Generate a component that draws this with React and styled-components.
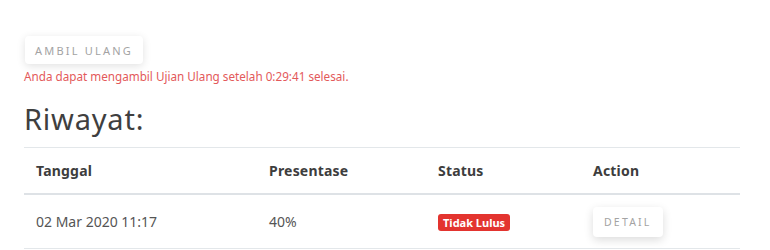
import React from "react";
import styled, { createGlobalStyle } from "styled-components";

const GlobalStyle = createGlobalStyle`
  html, body {
    margin: 0;
    padding: 0;
    background: #fff;
  }
  body {
    font-family: "Noto Sans", "Open Sans", sans-serif;
    color: #3d4852;
  }
`;

const Page = styled.div`
  width: 716px;
  padding: 36px 0 0 24px;
`;

const RetakeButton = styled.button`
  display: inline-block;
  margin-left: 1px;
  height: 28px;
  padding: 0 10px;
  background: #fff;
  border: 0;
  border-radius: 4px;
  box-shadow: 0 2px 8px rgba(0, 0, 0, 0.12);
  font-family: inherit;
  font-size: 11px;
  letter-spacing: 2.2px;
  color: #a3a3a3;
  text-transform: uppercase;
`;

const Notice = styled.p`
  margin: 4px 0 0;
  font-size: 11.7px;
  line-height: 16px;
  color: #e3595a;
`;

const Title = styled.h2`
  margin: 16px 0 0;
  font-size: 29px;
  font-weight: 400;
  letter-spacing: 0.8px;
  line-height: 38px;
  color: #3f3f3f;
`;

const Table = styled.table`
  width: 100%;
  margin-top: 9px;
  border-collapse: collapse;
  table-layout: fixed;
`;

const Th = styled.th`
  text-align: left;
  font-size: 14px;
  font-weight: 700;
  letter-spacing: 0.2px;
  color: #3d3d3d;
  padding: 0 12px;
  height: 45px;
  border-top: 1px solid #e3e7ea;
  border-bottom: 2px solid #dee2e6;
  width: ${(p) => p.$w || "auto"};
`;

const Td = styled.td`
  font-size: 14px;
  color: #555;
  padding: 0 12px;
  height: 53px;
  border-bottom: 1px solid #e3e7ea;
`;

const Badge = styled.span`
  display: inline-block;
  background: #e3342f;
  color: #fff;
  font-size: 11px;
  font-weight: 700;
  padding: 2px 5px;
  border-radius: 3px;
  line-height: 13px;
  margin-top: 2px;
`;

const DetailButton = styled(RetakeButton)`
  height: 30px;
  padding: 0 11px;
  font-size: 10.5px;
  letter-spacing: 2.2px;
  margin-left: 0;
  box-shadow: 0 3px 10px rgba(0, 0, 0, 0.14);
`;

export default function App() {
  return (
    <Page>
      <GlobalStyle />
      <RetakeButton>Ambil Ulang</RetakeButton>
      <Notice>Anda dapat mengambil Ujian Ulang setelah 0:29:41 selesai.</Notice>
      <Title>Riwayat:</Title>
      <Table>
        <thead>
          <tr>
            <Th $w="209px">Tanggal</Th>
            <Th $w="145px">Presentase</Th>
            <Th $w="131px">Status</Th>
            <Th>Action</Th>
          </tr>
        </thead>
        <tbody>
          <tr>
            <Td>02 Mar 2020 11:17</Td>
            <Td>40%</Td>
            <Td>
              <Badge>Tidak Lulus</Badge>
            </Td>
            <Td>
              <DetailButton>Detail</DetailButton>
            </Td>
          </tr>
        </tbody>
      </Table>
    </Page>
  );
}
